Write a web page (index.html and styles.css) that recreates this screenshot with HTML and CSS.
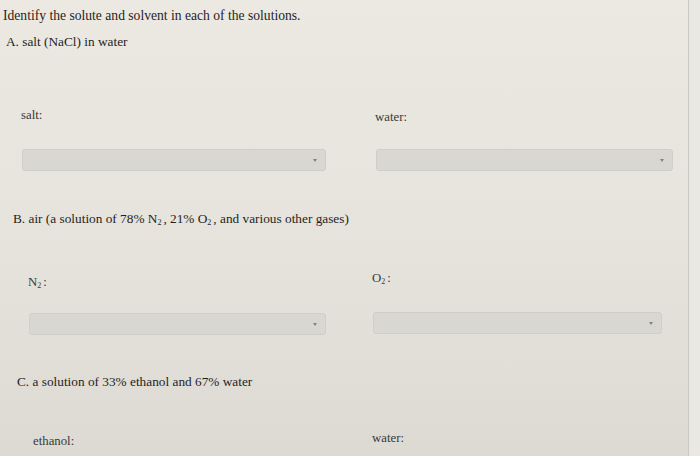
FILE: index.html
```html
<!DOCTYPE html>
<html lang="en">
<head>
    <meta charset="UTF-8">
    <title>Solutions</title>
    <link rel="stylesheet" href="styles.css">
</head>
<body>
    <div class="page">
        <p class="prompt">Identify the solute and solvent in each of the solutions.</p>

        <div class="part part-a">
            <p class="part-title">A. salt (NaCl) in water</p>
            <div class="answers">
                <div class="answer">
                    <label>salt:</label>
                    <div class="select"><span class="caret"></span></div>
                </div>
                <div class="answer">
                    <label>water:</label>
                    <div class="select"><span class="caret"></span></div>
                </div>
            </div>
        </div>

        <div class="part part-b">
            <p class="part-title">B. air (a solution of 78% N<sub>2</sub>, 21% O<sub>2</sub>, and various other gases)</p>
            <div class="answers">
                <div class="answer">
                    <label>N<sub>2</sub>:</label>
                    <div class="select"><span class="caret"></span></div>
                </div>
                <div class="answer">
                    <label>O<sub>2</sub>:</label>
                    <div class="select"><span class="caret"></span></div>
                </div>
            </div>
        </div>

        <div class="part part-c">
            <p class="part-title">C. a solution of 33% ethanol and 67% water</p>
            <div class="answers">
                <div class="answer">
                    <label>ethanol:</label>
                </div>
                <div class="answer">
                    <label>water:</label>
                </div>
            </div>
        </div>
    </div>
</body>
</html>
```

FILE: styles.css
```css
body { margin: 0; background: #e9e8e3; font-family: "Liberation Serif", "Times New Roman", serif; color: #1f1f1f; }
.page { width: 688px; height: 456px; overflow: hidden; border-right: 1px solid #cac8c0; background: linear-gradient(180deg, #ebe9e2 0%, #e5e3db 55%, #dcdad2 100%); }
p { margin: 0; }
.prompt { font-size: 13.6px; line-height: 16px; margin: 8px 0 0 3px; }
.part-title { font-size: 13.3px; line-height: 16px; }
.part-title sub, label sub { font-size: 8px; vertical-align: -2px; line-height: 0; margin-right: 2px; }
.answers { display: grid; }
.answer label { display: block; font-size: 12.8px; line-height: 16px; color: #3a3a38; }
.select { position: relative; height: 20px; margin-left: 1px; background: #d8d7d1; border: 1px solid #cfcec8; border-radius: 3px; }
.caret { position: absolute; right: 8px; top: 9px; border-left: 2px solid transparent; border-right: 2px solid transparent; border-top: 3px solid #85857f; }

.part-a { margin-top: 10px; }
.part-a .part-title { padding-left: 6px; }
.part-a .answers { margin-top: 57px; padding-left: 21px; grid-template-columns: 305px 298px; column-gap: 49px; }
.part-a .answer + .answer label { margin-top: 2px; }
.part-a .select { margin-top: 26px; }
.part-a .answer + .answer .select { margin-top: 24px; }

.part-b { margin-top: 40px; }
.part-b .part-title { padding-left: 13px; }
.part-b .answers { margin-top: 47px; padding-left: 28px; grid-template-columns: 298px 290px; column-gap: 46px; }
.part-b .answer + .answer label { margin-top: -4px; }
.part-b .select { margin-top: 23px; }
.part-b .answer + .answer .select { margin-top: 26px; }

.part-c { margin-top: 39px; }
.part-c .part-title { padding-left: 17px; }
.part-c .answers { margin-top: 43px; padding-left: 33px; grid-template-columns: 339px 200px; }
.part-c .answer + .answer label { margin-top: -3px; }
```
